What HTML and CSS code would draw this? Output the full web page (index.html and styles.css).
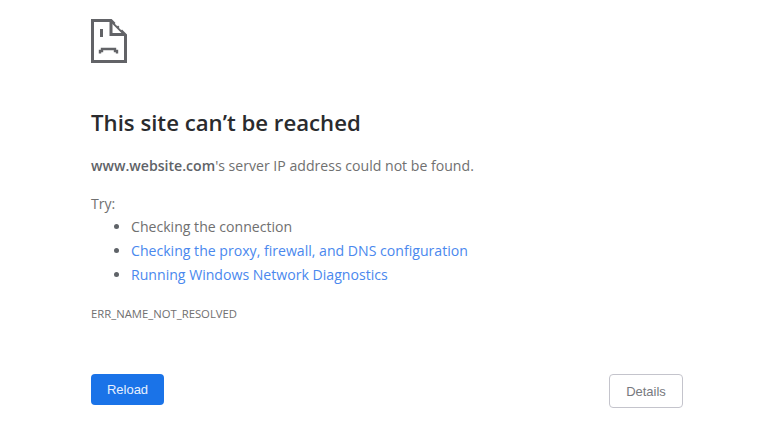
FILE: index.html
```html
<!DOCTYPE html>
<html lang="en">
<head>
    <meta charset="UTF-8">
    <title>www.website.com</title>
    <link rel="stylesheet" href="styles.css">
</head>
<body>

<div class="container">
    <svg class="sad-icon" width="36" height="44" viewBox="0 0 36 44">
        <path d="M1.5 1.5H20L34.5 16V42.5H1.5Z" fill="none" stroke="#626367" stroke-width="3"/>
        <path d="M20 2V15.5H34" fill="none" stroke="#626367" stroke-width="3"/>
        <path d="M24.5 4L27 6.5M28.5 8L31 10.5" stroke="#fff" stroke-width="2"/>
        <rect x="9" y="10" width="3" height="8" fill="#626367"/>
        <path d="M9 34.5V32H11V30H24V32H26V34.5" fill="none" stroke="#626367" stroke-width="2.4"/>
    </svg>

    <h1>This site can’t be reached</h1>
    <p class="message"><b>www.website.com</b>'s server IP address could not be found.</p>

    <p class="try">Try:</p>
    <ul>
        <li>Checking the connection</li>
        <li><a href="#">Checking the proxy, firewall, and DNS configuration</a></li>
        <li><a href="#">Running Windows Network Diagnostics</a></li>
    </ul>

    <div class="error-code">ERR_NAME_NOT_RESOLVED</div>

    <div class="buttons">
        <button class="btn-reload">Reload</button>
        <button class="btn-details">Details</button>
    </div>
</div>

</body>
</html>
```

FILE: styles.css
```css
body {
    font-family: 'Open Sans', 'Noto Sans', sans-serif;
    background: #fff;
    color: #707070;
    margin: 0;
    height: 432px;
    overflow: hidden;
}
.container {
    width: 592px;
    margin-left: 91px;
    padding-top: 19px;
}
.sad-icon {
    display: block;
}
h1 {
    margin: 44px 0 0;
    font-size: 22.2px;
    line-height: 32px;
    font-weight: 600;
    color: #2a2b2e;
}
.message {
    margin: 15px 0 0;
    font-size: 14.1px;
    line-height: 24px;
}
.message b {
    font-weight: 600;
    color: #5f6368;
}
.try {
    margin: 14px 0 0;
    font-size: 14.1px;
    line-height: 24px;
}
ul {
    margin: -1px 0 0;
    padding: 0 0 0 40px;
}
li {
    font-size: 14.1px;
    line-height: 24px;
}
li::marker {
    color: #5f6368;
}
a {
    color: #4a88ee;
    text-decoration: none;
}
.error-code {
    margin-top: 19px;
    font-size: 11.3px;
    line-height: 16px;
}
.buttons {
    display: flex;
    justify-content: space-between;
    align-items: flex-start;
    margin-top: 52px;
}
button {
    font-family: 'Liberation Sans', sans-serif;
    font-size: 13px;
    border-radius: 4px;
    cursor: pointer;
}
.btn-reload {
    width: 73px;
    height: 31px;
    background-color: #1a73e8;
    color: #e8f0fe;
    border: none;
}
.btn-details {
    width: 74px;
    height: 34px;
    background-color: #fff;
    color: #77797e;
    border: 1px solid #c4c4cc;
}
```
